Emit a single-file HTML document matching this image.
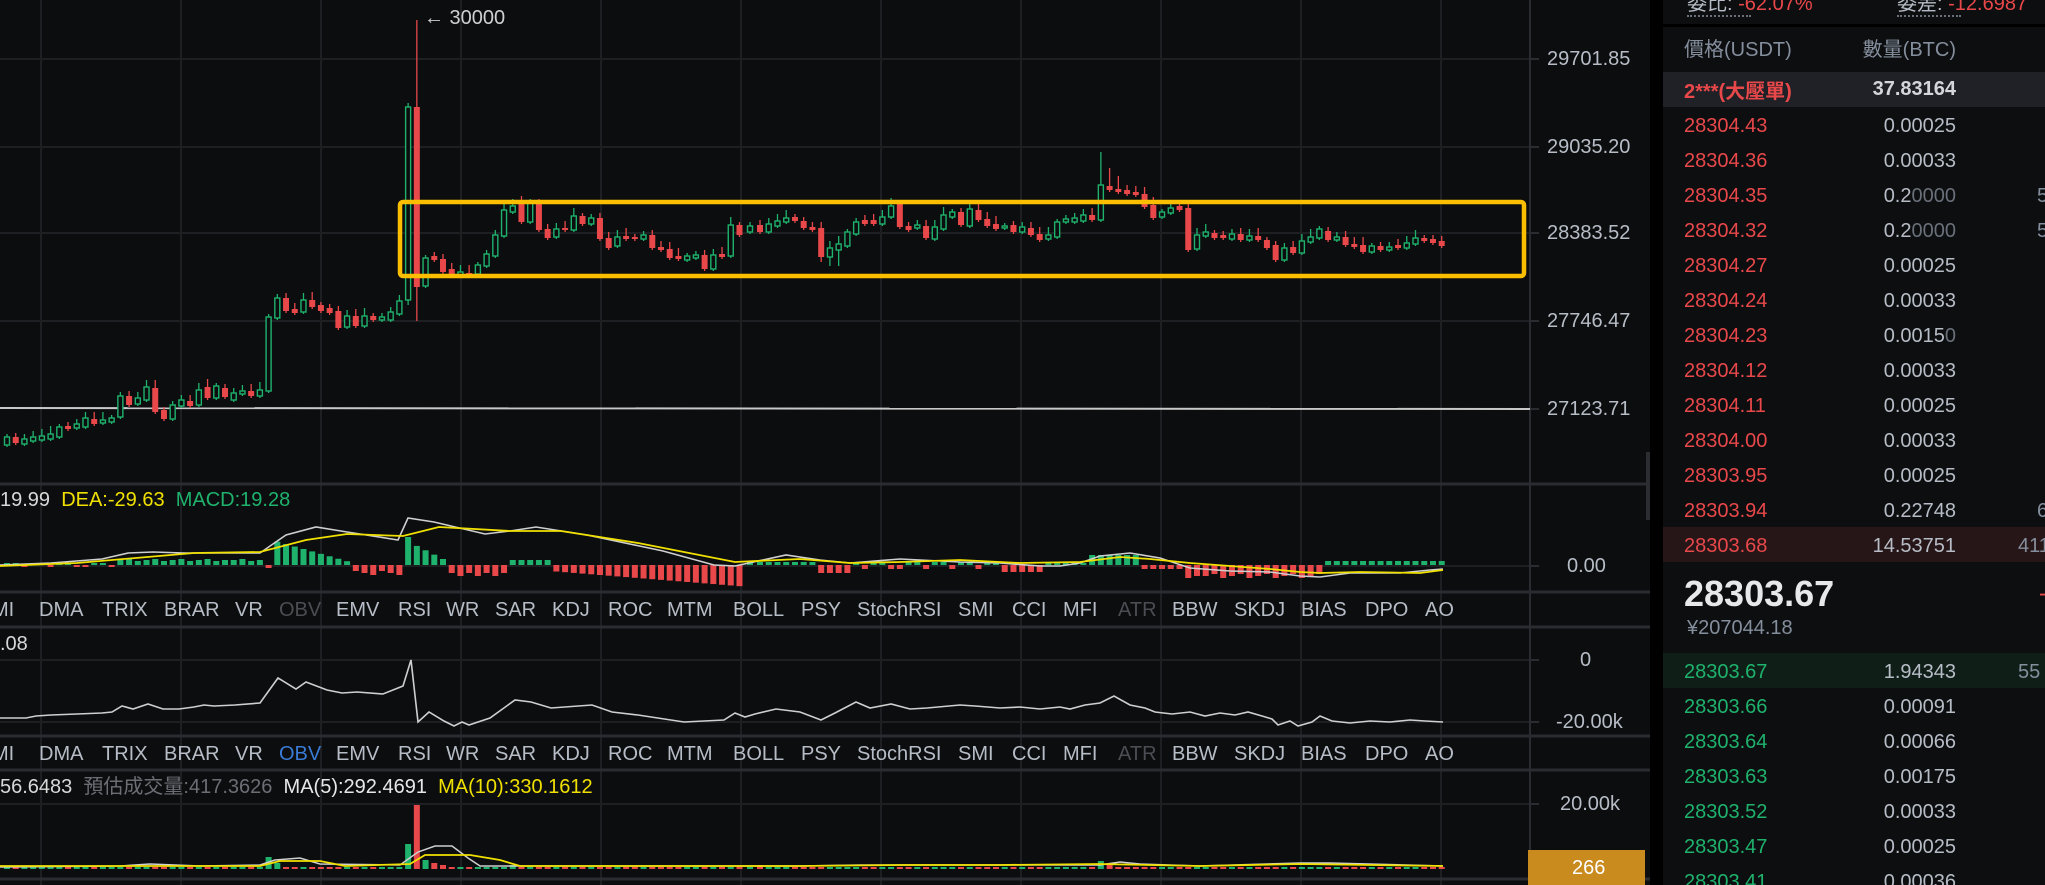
<!DOCTYPE html>
<html><head><meta charset="utf-8">
<style>
*{margin:0;padding:0;box-sizing:border-box}
html,body{width:2045px;height:885px;overflow:hidden;background:#0c0d0f;font-family:"Liberation Sans","Noto Sans CJK TC",sans-serif}
.t{position:absolute;white-space:nowrap;line-height:1}
#ob{position:absolute;left:1663px;top:0;width:382px;height:885px;background:#0d0e10;overflow:hidden}
#gap{position:absolute;left:1650px;top:0;width:13px;height:885px;background:#000}
.row{position:absolute;left:0;width:382px;height:35px}
.p{position:absolute;left:21px;top:8px;font-size:20px}
.q{position:absolute;right:89px;top:8px;font-size:20px;color:#b7bdc6;text-align:right}
.c{position:absolute;left:374px;top:8px;font-size:20px;color:#848e9c}
.r{color:#e8484a}.g{color:#1fb26d}.dim{color:#6a707a}
</style></head><body>
<svg id="ch" width="1650" height="885" style="position:absolute;left:0;top:0" xmlns="http://www.w3.org/2000/svg">
<rect width="1650" height="885" fill="#0c0d0f"/>
<g id="grid" stroke="#1d1f23" stroke-width="2"></g>
<g stroke="#2a2c31" stroke-width="3">
<line x1="0" y1="484" x2="1650" y2="484"/><line x1="0" y1="592" x2="1650" y2="592"/>
<line x1="0" y1="627" x2="1650" y2="627"/><line x1="0" y1="736" x2="1650" y2="736"/>
<line x1="0" y1="770" x2="1650" y2="770"/><line x1="0" y1="879" x2="1650" y2="879"/>
</g>
<line x1="1530" y1="0" x2="1530" y2="885" stroke="#2a2c31" stroke-width="2"/>
<g id="ticks" stroke="#2a2c31" stroke-width="2"></g>
<line x1="0" y1="408" x2="1530" y2="409" stroke="#c8c8c8" stroke-width="2"/>
<g id="candles"></g>
<rect x="400" y="202" width="1124" height="74" rx="3" fill="none" stroke="#fcbf00" stroke-width="4.5"/>
<g id="macd"></g>
<polyline fill="none" stroke="#cfcfcf" stroke-width="1.6" points="0,565 51,563 102,559 128,553 153,552 184,553 260,553 286,535 316,527 347,532 398,540 408,518 434,522 485,534 510,531 536,527 587,535 663,551 714,565 735,566 786,555 820,560 850,563 900,559 960,562 1000,563 1040,566 1060,566 1080,563 1100,556 1130,553 1160,558 1190,568 1230,571 1270,572 1300,576 1320,577 1350,573 1400,573 1430,570 1443,569"/>
<polyline fill="none" stroke="#f0e000" stroke-width="1.8" points="0,566 77,563 194,553 260,552 306,540 347,534 403,536 439,527 510,531 561,531 638,543 735,562 800,559 850,563 900,562 960,560 1020,563 1080,562 1120,557 1150,559 1190,563 1230,566 1270,569 1300,572 1320,573 1360,572 1420,573 1443,570"/>
<polyline fill="none" stroke="#cfcfcf" stroke-width="1.6" points="0,718 26,718 36,716 51,715 77,714 102,713 112,712 122,706 133,709 148,704 163,709 179,709 194,707 204,705 214,706 235,705 260,703 278,678 296,689 306,682 327,690 342,693 357,692 383,694 403,686 411,660 418,722 429,712 444,721 454,726 462,722 469,725 490,718 515,700 531,702 551,708 592,705 612,712 638,715 684,722 724,720 735,713 745,717 755,714 776,709 800,712 821,720 835,713 856,702 870,708 891,704 910,709 927,708 960,705 975,706 1000,708 1020,707 1040,709 1060,707 1070,709 1085,705 1100,703 1114,696 1130,705 1145,708 1155,712 1172,714 1190,712 1205,716 1220,713 1235,715 1248,712 1262,716 1272,719 1278,725 1290,721 1298,726 1312,722 1320,716 1332,721 1350,723 1370,721 1390,722 1410,720 1425,721 1443,722"/>
<g id="vol"></g>
<polyline fill="none" stroke="#cfcfcf" stroke-width="1.5" points="0,867 120,866 150,864 200,866 260,865 275,860 300,858 320,864 400,865 418,852 435,846 452,846 468,858 480,866 700,866 760,866 800,866 860,865 900,865 1100,865 1120,862 1140,864 1200,866 1300,863 1330,863 1443,866"/>
<polyline fill="none" stroke="#f0e000" stroke-width="1.8" points="0,866 180,866 260,866 280,861 320,861 345,866 410,864 425,855 470,855 500,860 520,866 800,866 900,865 1000,865 1100,864 1200,866 1300,864 1443,866"/>
<rect x="1528" y="850" width="117" height="35" fill="#c98a1e"/>
<rect x="1646" y="452" width="6" height="68" fill="#2b2d31"/>
</svg>

<div class="t" style="left:424px;top:8px;font-size:20px;color:#d0d0d0">← 30000</div>
<div class="t" style="left:1547px;top:49px;font-size:20px;color:#b7bdc6">29701.85</div>
<div class="t" style="left:1547px;top:137px;font-size:20px;color:#b7bdc6">29035.20</div>
<div class="t" style="left:1547px;top:223px;font-size:20px;color:#b7bdc6">28383.52</div>
<div class="t" style="left:1547px;top:311px;font-size:20px;color:#b7bdc6">27746.47</div>
<div class="t" style="left:1547px;top:399px;font-size:20px;color:#b7bdc6">27123.71</div>
<div class="t" style="left:1567px;top:556px;font-size:20px;color:#b7bdc6">0.00</div>
<div class="t" style="left:1580px;top:650px;font-size:20px;color:#b7bdc6">0</div>
<div class="t" style="left:1556px;top:712px;font-size:20px;color:#b7bdc6">-20.00k</div>
<div class="t" style="left:1560px;top:794px;font-size:20px;color:#b7bdc6">20.00k</div>
<div class="t" style="left:1572px;top:858px;font-size:20px;color:#fff">266</div>

<div class="t" style="left:0;top:490px;font-size:20px"><span style="color:#d8d8d8">19.99</span>&nbsp; <span style="color:#f0e000">DEA:-29.63</span>&nbsp; <span style="color:#1fb26d">MACD:19.28</span></div>
<div class="t" style="left:0;top:634px;font-size:20px;color:#d8d8d8">.08</div>
<div class="t" style="left:0;top:777px;font-size:20px"><span style="color:#d8d8d8">56.6483</span>&nbsp; <span style="color:#6b6e74">預估成交量:417.3626</span>&nbsp; <span style="color:#e8e8e8">MA(5):292.4691</span>&nbsp; <span style="color:#f0e000">MA(10):330.1612</span></div>
<div id="tabs"></div>

<div id="gap"></div>
<div id="ob">
 <div class="t" style="left:24px;top:-6px;font-size:20px;color:#b7bdc6">委比: <span class="r">-62.07%</span></div>
 <div style="position:absolute;left:24px;top:15px;width:64px;border-top:2px dotted #6a707a"></div>
 <div class="t" style="left:234px;top:-6px;font-size:20px;color:#b7bdc6">委差: <span class="r">-12.6987</span></div>
 <div style="position:absolute;left:234px;top:15px;width:64px;border-top:2px dotted #6a707a"></div>
 <div style="position:absolute;left:0;top:24px;width:382px;height:3px;background:#000"></div>
 <div class="t" style="left:21px;top:40px;font-size:20px;color:#848e9c">價格(USDT)</div>
 <div class="t" style="right:89px;top:40px;font-size:20px;color:#848e9c">數量(BTC)</div>
 <div class="row" style="top:72px;background:#1f2126"><div class="p r" style="font-weight:bold;top:3px">2***(大壓單)</div><div class="q" style="font-weight:bold;color:#d4d6da;top:6px">37.83164</div></div>
 <div id="asks"></div>
 <div class="row" style="top:527px;background:#271618"><div class="p r">28303.68</div><div class="q">14.53751</div><div class="c" style="left:355px">411</div></div>
 <div class="t" style="left:21px;top:576px;font-size:36px;font-weight:bold;color:#e6e8ea">28303.67</div>
 <div class="t" style="left:24px;top:618px;font-size:20px;color:#848e9c">¥207044.18</div>
 <div class="t r" style="left:376px;top:582px;font-size:24px">-</div>
 <div class="row" style="top:653px;background:#0f1f18"><div class="p g">28303.67</div><div class="q">1.94343</div><div class="c" style="left:355px">55</div></div>
 <div id="bids"></div>
</div>

<script>
var NS="http://www.w3.org/2000/svg";
function el(p,t,a){var e=document.createElementNS(NS,t);for(var k in a)e.setAttribute(k,a[k]);p.appendChild(e);return e;}
var grid=document.getElementById('grid');
[41,181,321,461,601,741,881,1021,1161,1301,1441].forEach(function(x){el(grid,'line',{x1:x,y1:0,x2:x,y2:885});});
[59,147,233,321,566,660,722,804].forEach(function(y){el(grid,'line',{x1:0,y1:y,x2:1530,y2:y});});
var tk=document.getElementById('ticks');
[59,147,233,321,409,566,660,722,804].forEach(function(y){el(tk,'line',{x1:1530,y1:y,x2:1539,y2:y});});
var A=[[437,445,1],[437,443,0],[439,444,1],[437,441,1],[436,440,1],[434,439,1],[427,437,1],[426,429,0],[424,428,1],[418,427,1],[419,424,0],[420,423,1],[418,422,1],[396,417,1],[396,405,0],[398,404,1],[387,400,1],[388,412,0],[410,419,0],[405,419,1],[400,406,1],[401,406,0],[390,405,1],[387,398,0],[386,398,1],[388,397,0],[393,400,1],[391,394,1],[391,396,0],[390,396,1],[317,391,1],[298,318,1],[298,311,0],[309,313,0],[300,312,1],[300,307,0],[305,311,0],[308,313,0],[311,328,0],[316,327,1],[316,326,0],[316,326,1],[316,320,0],[317,320,1],[312,320,1],[301,314,1],[107,300,1],[107,287,0],[258,286,1],[256,260,0],[259,272,0],[269,274,0],[272,275,1],[273,276,0],[265,274,1],[254,266,1],[235,256,1],[210,236,1],[206,212,1],[204,222,0],[202,222,1],[203,230,0],[229,238,0],[229,237,1],[228,230,0],[216,230,1],[216,224,0],[218,224,1],[218,239,0],[238,248,0],[237,246,1],[236,239,0],[237,239,0],[235,239,1],[235,248,0],[247,250,0],[249,258,0],[256,259,0],[256,260,1],[255,258,1],[255,269,0],[255,269,1],[254,257,0],[225,256,1],[225,235,0],[226,232,1]];
var B=[[225,232,0],[224,232,1],[221,226,1],[218,222,1],[217,221,0],[221,228,0],[227,230,0],[228,257,0],[248,257,1],[244,250,1],[232,246,1],[222,234,1],[220,224,0],[220,224,0],[217,224,1],[206,217,1],[203,227,0],[226,230,0],[225,228,1],[226,238,0],[227,239,1],[215,229,1],[212,217,1],[212,225,0],[209,226,1],[210,220,0],[219,226,0],[224,229,0],[226,228,1],[225,232,0],[227,232,1],[228,235,0],[234,240,0],[235,239,1],[222,237,1],[219,222,1],[218,222,1],[215,221,1],[215,220,0],[185,220,1],[186,190,0],[189,192,0],[190,194,0],[192,195,0],[194,207,0],[205,218,0],[212,217,1],[208,213,1],[206,210,0],[208,250,0],[235,249,1],[232,236,1],[233,238,0],[235,238,0],[234,239,1],[234,240,0],[236,240,1],[236,240,0],[240,248,0],[245,260,0],[248,260,1],[247,253,0],[241,253,1],[237,242,1],[229,238,1],[231,240,0],[237,240,1],[237,245,0],[244,247,0],[245,252,0],[246,252,1],[246,250,0],[247,250,1],[245,248,0],[243,248,1],[238,244,1],[238,241,0],[239,243,0],[241,246,0]];
var C=[];
A.forEach(function(c,i){C.push([i<85?7+i*8.72:750].concat(c));});
B.forEach(function(c,k){C.push([760+k*8.74].concat(c));});
var cg=document.getElementById('candles'),RED='#e8484a',GRN='#1fb26d';
var wk={46:[103,305],47:[20,321]};
C.forEach(function(c,i){
 var x=c[0],t=c[1],b=c[2],g=c[3],col=g?GRN:RED;
 var wt=t-(3+(i*7)%6),wb=b+(2+(i*5)%5);
 if(wk[i]){wt=wk[i][0];wb=wk[i][1];}
 if(i==86+39){wt=152;} if(i==86+40){wt=168;} if(i==86+41){wt=176;}
 if(i==86+7){wb=262;} if(i==86+8||i==86+9){wb=266;}
 el(cg,'line',{x1:x,y1:wt,x2:x,y2:wb,stroke:col,'stroke-width':1.3});
 if(g) el(cg,'rect',{x:x-2.5,y:t,width:5,height:Math.max(b-t,2),fill:'#0c0d0f',stroke:col,'stroke-width':1.4});
 else el(cg,'rect',{x:x-3,y:t,width:6,height:Math.max(b-t,2),fill:col});
});
var mg=document.getElementById('macd');
function hv(x){
 if(x<120)return (Math.round(x/9)%3==0)?-2:2;
 if(x<260)return 4+((x/9|0)%3);
 if(x<275)return -3;
 if(x<350)return 24-(x-275)*0.28;
 if(x<405)return -6-((x/9|0)%3)*2;
 if(x<415)return 28;
 if(x<445)return 20-(x-415)*0.5;
 if(x<505)return -8-((x/9|0)%2)*3;
 if(x<550)return 5;
 if(x<745)return -6-(x-550)*0.08;
 if(x<815)return 3;
 if(x<850)return -8;
 if(x<1000)return ((x/9|0)%3==0)?-4:3;
 if(x<1045)return -7;
 if(x<1090)return 2;
 if(x<1140)return 10;
 if(x<1180)return -4;
 if(x<1320)return -13+((x/9|0)%3)*2;
 return 4;
}
C.forEach(function(c,i){var x=c[0],v=hv(x),z=565,col=v>0?GRN:RED;
 if(v>0)el(mg,'rect',{x:x-3,y:z-v,width:6,height:v,fill:col});
 else el(mg,'rect',{x:x-3,y:z,width:6,height:-v,fill:col});});
var vg=document.getElementById('vol');
var big={30:12,31:6,46:25,47:64,48:9,49:6,50:4,125:8,126:5,58:4,86:4};
C.forEach(function(c,i){var x=c[0],h=big[i]||(2+(i*3)%3),col=c[3]?GRN:RED;
 el(vg,'rect',{x:x-3,y:869-h,width:6,height:h,fill:col});});
var tabs=[["MI",0],["DMA",39],["TRIX",102],["BRAR",164],["VR",235],["OBV",279],["EMV",336],["RSI",398],["WR",446],["SAR",495],["KDJ",552],["ROC",608],["MTM",667],["BOLL",733],["PSY",801],["StochRSI",857],["SMI",958],["CCI",1012],["MFI",1063],["ATR",1118],["BBW",1172],["SKDJ",1234],["BIAS",1301],["DPO",1365],["AO",1425]];
var h='';
[[600,0],[744,1]].forEach(function(r){tabs.forEach(function(t){var col='#b7bdc6';
 if(t[0]=='ATR')col='#4a4d52'; if(t[0]=='OBV')col=r[1]?'#3a7bd5':'#4a4d52';
 h+='<div class="t" style="left:'+(t[1]-(t[0]=='MI'?8:0))+'px;top:'+r[0]+'px;font-size:20px;color:'+col+'">'+t[0]+'</div>';});});
document.getElementById('tabs').innerHTML=h;
var asks=[["28304.43","0.00025"],["28304.36","0.00033"],["28304.35","0.2","0000","5"],["28304.32","0.2","0000","5"],["28304.27","0.00025"],["28304.24","0.00033"],["28304.23","0.0015","0"],["28304.12","0.00033"],["28304.11","0.00025"],["28304.00","0.00033"],["28303.95","0.00025"],["28303.94","0.22748","","6"]];
var s='';asks.forEach(function(a,i){s+='<div class="row" style="top:'+(107+i*35)+'px"><div class="p r">'+a[0]+'</div><div class="q">'+a[1]+(a[2]?'<span class="dim">'+a[2]+'</span>':'')+'</div>'+(a[3]?'<div class="c">'+a[3]+'</div>':'')+'</div>';});
document.getElementById('asks').innerHTML=s;
var bids=[["28303.66","0.00091"],["28303.64","0.00066"],["28303.63","0.00175"],["28303.52","0.00033"],["28303.47","0.00025"],["28303.41","0.00036"]];
s='';bids.forEach(function(a,i){s+='<div class="row" style="top:'+(688+i*35)+'px"><div class="p g">'+a[0]+'</div><div class="q">'+a[1]+'</div></div>';});
document.getElementById('bids').innerHTML=s;
</script>
</body></html>
